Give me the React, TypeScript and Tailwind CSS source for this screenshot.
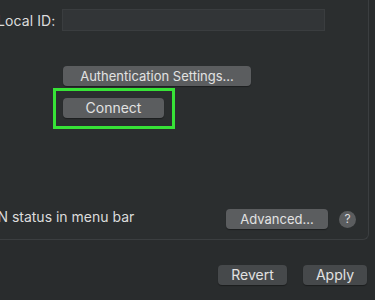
// React Imports
import { FC, ReactNode } from "react";

/**
 * Small macOS-style push button.
 */
const PushButton: FC<{ className?: string; children: ReactNode }> = ({
  className = "",
  children,
}) => {
  return (
    <div
      className={`flex h-[20px] items-center justify-center rounded-[4px] bg-[#5b5d5f] text-[13px] leading-none text-[#e2e2e2] shadow-[0_1px_1px_rgba(0,0,0,0.35)] ${className}`}
    >
      {children}
    </div>
  );
};

export default function App() {
  return (
    <div className="relative h-[300px] w-[375px] overflow-hidden bg-[#292c2d] font-['Inter',_'Liberation_Sans',_sans-serif] text-[#dcdcdc]">
      {/* Inset panel */}
      <div className="flex h-[240px] w-[369px] flex-col rounded-br-[6px] border-r border-b border-[#3b3e40] bg-[#2b2e2f]">
        {/* Local ID row */}
        <div className="mt-[9px] flex items-center">
          <div className="w-[55px] text-right text-[14px] tracking-[0.1px] whitespace-nowrap -ml-[3px]">
            Local ID:
          </div>
          <div className="ml-[10px] h-[22px] w-[263px] border border-[#3a3d3f] bg-[#323537]" />
        </div>

        {/* Buttons */}
        <div className="ml-[63px] mt-[35px] flex flex-col">
          <PushButton className="w-[188px] text-[13.5px]">Authentication Settings...</PushButton>
          <div className="-ml-[10px] mt-[2px] w-[122px] border-[3px] border-[#37e337] px-[7px] pt-[7px] pb-[8px]">
            <PushButton className="w-[101px] text-[14px]">Connect</PushButton>
          </div>
        </div>

        {/* Status row */}
        <div className="mt-[77px] flex items-center">
          <div className="-ml-[62px] w-[300px] text-[14px] whitespace-nowrap">
            Show VPN status in menu bar
          </div>
        </div>
        <div className="-mt-[18px] flex items-center">
          <PushButton className="ml-[226px] w-[102px] text-[13.5px]">Advanced...</PushButton>
          <div className="ml-[11px] flex h-[17px] w-[17px] items-center justify-center rounded-full bg-[#5b5d5f] text-[12px] leading-none text-[#dcdcdc]">
            ?
          </div>
        </div>
      </div>

      {/* Footer buttons */}
      <div className="mt-[25px] flex">
        <PushButton className="ml-[218px] h-[19px] w-[69px] bg-[#46494b] text-[14px]">Revert</PushButton>
        <PushButton className="ml-[16px] h-[19px] w-[64px] bg-[#46494b] text-[14px]">Apply</PushButton>
      </div>
    </div>
  );
}
